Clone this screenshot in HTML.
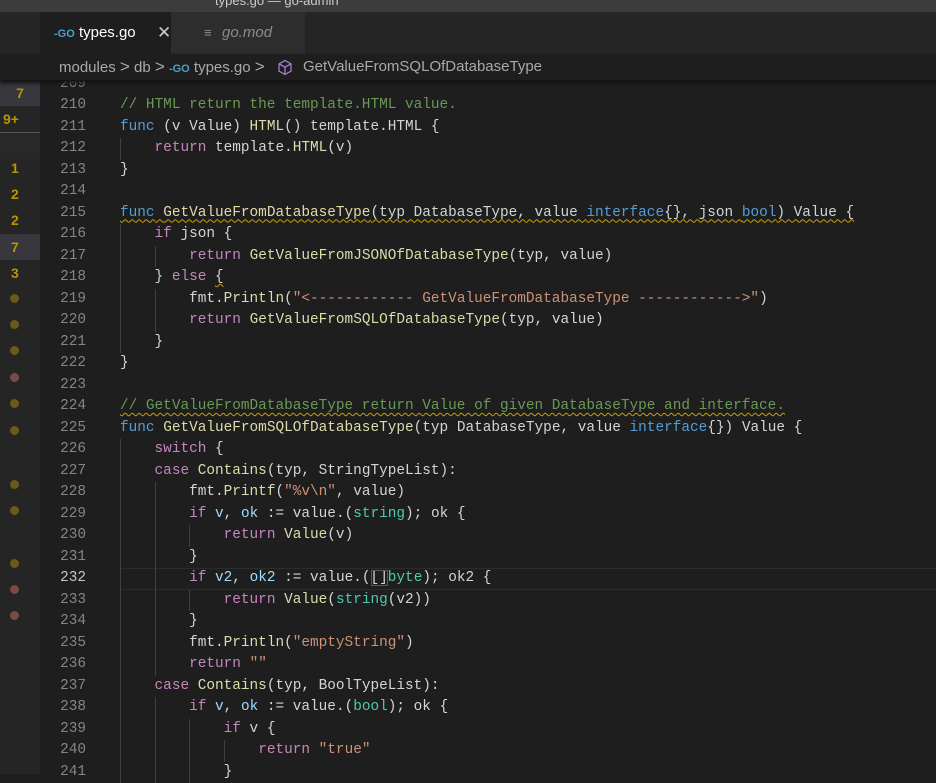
<!DOCTYPE html>
<html><head><meta charset="utf-8">
<style>
*{margin:0;padding:0;box-sizing:border-box}
body{width:936px;height:774px;overflow:hidden;background:#1e1e1e;position:relative;font-family:"Liberation Sans",sans-serif}
#title{position:absolute;left:0;top:0;width:936px;height:12px;background:#3c3c3c;overflow:hidden}
#title span{position:absolute;left:215px;top:-7px;font-size:13px;color:#ccc}
#tabs{position:absolute;left:0;top:12px;width:936px;height:42px;background:#252526}
.tab{position:absolute;top:0;height:42px;font-size:15px;line-height:42px}
#bc{position:absolute;left:0;top:54px;width:936px;height:26px;background:#1e1e1e;color:#a9a9a9;font-size:15px;line-height:26px;box-shadow:0 3px 4px #111;z-index:3}
#left{position:absolute;left:0;top:80px;width:40px;height:694px;background:#252526}
.b{position:absolute;left:0;width:40px;height:26px;text-align:center;color:#b89500;font-weight:bold;font-size:14px;line-height:26px}
.d{position:absolute;left:10px;width:9px;height:9px;border-radius:50%;background:#6b5a17}
.d.r{background:#7a4b45}
#code{position:absolute;left:40px;top:3px;width:896px;height:774px;font-family:"Liberation Mono",monospace;font-size:14.4px}
.l{position:absolute;left:0;width:896px;height:21.5px;line-height:21.5px;white-space:pre;color:#d4d4d4}
.n{position:absolute;left:0;width:46px;text-align:right;color:#858585}
.c{position:absolute;left:80px}
.g{display:inline-block;width:34.56px;height:21.5px;vertical-align:top;border-left:1px solid #404040}
.k{color:#c586c0}.f{color:#569cd6}.fn{color:#dcdcaa}.v{color:#9cdcfe}.t{color:#4ec9b0}.s{color:#ce9178}.cm{color:#6a9955}
.w{text-decoration:underline wavy #c9a000;text-decoration-thickness:1px;text-underline-offset:3px}
.go{color:#4aa3c9;font-weight:bold;font-size:11px}
</style></head><body>
<div id="title"><span>types.go — go-admin</span></div>
<div id="tabs">
 <div class="tab" style="left:40px;width:131px;background:#1e1e1e;color:#fff;padding-left:14px"><span class="go">-GO</span> types.go <span style="position:absolute;left:117px;color:#ccc;font-size:17px">✕</span></div>
 <div class="tab" style="left:171px;width:134px;background:#2d2d2d;color:#8b8b8b;font-style:italic"><span style="font-style:normal;font-size:13px;position:absolute;left:33px">≡</span><span style="position:absolute;left:51px">go.mod</span></div>
</div>
<div id="bc"><span style="position:absolute;left:59px">modules <span style="font-size:17px">&gt;</span> db <span style="font-size:17px">&gt;</span> <span class="go">-GO</span> types.go <span style="font-size:17px">&gt;</span></span>
<svg style="position:absolute;left:277px;top:5px" width="16" height="17" viewBox="0 0 16 17"><path d="M8 1.5 14 4.8v7.4L8 15.5 2 12.2V4.8z M2 4.8 8 8.2 14 4.8 M8 8.2v7.3" fill="none" stroke="#b180d7" stroke-width="1.2"/></svg>
<span style="position:absolute;left:303px">GetValueFromSQLOfDatabaseType</span></div>
<div id="left">
 <div class="b" style="top:0;background:#37373d">7</div>
 <div class="b" style="top:26px;text-align:left;padding-left:3px">9+</div>
 <div style="position:absolute;top:52px;left:0;width:40px;height:1px;background:#555"></div>
 <div style="position:absolute;top:53px;left:0;width:40px;height:26px;background:#282829"></div>
 <div class="b" style="top:75px;text-align:left;padding-left:11px">1</div>
 <div class="b" style="top:101px;text-align:left;padding-left:11px">2</div>
 <div class="b" style="top:127px;text-align:left;padding-left:11px">2</div>
 <div class="b" style="top:154px;background:#37373d;text-align:left;padding-left:11px">7</div>
 <div class="b" style="top:180px;text-align:left;padding-left:11px">3</div>
 <div class="d" style="top:214px"></div><div class="d" style="top:240px"></div><div class="d" style="top:266px"></div>
 <div class="d r" style="top:293px"></div><div class="d" style="top:319px"></div><div class="d" style="top:346px"></div>
 <div class="d" style="top:400px"></div><div class="d" style="top:426px"></div>
 <div class="d" style="top:479px"></div><div class="d r" style="top:505px"></div><div class="d r" style="top:531px"></div>
</div>
<div id="code">
<div class="l" style="top:70.5px"><span class="n">209</span></div>
<div class="l" style="top:92px"><span class="n">210</span><span class="c"><span class="cm">// HTML return the template.HTML value.</span></span></div>
<div class="l" style="top:113.5px"><span class="n">211</span><span class="c"><span class="f">func</span> (v Value) <span class="fn">HTML</span>() template.HTML {</span></div>
<div class="l" style="top:135px"><span class="n">212</span><span class="c"><span class="g"></span><span class="k">return</span> template.<span class="fn">HTML</span>(v)</span></div>
<div class="l" style="top:156.5px"><span class="n">213</span><span class="c">}</span></div>
<div class="l" style="top:178px"><span class="n">214</span></div>
<div class="l" style="top:199.5px"><span class="n">215</span><span class="c w"><span class="f">func</span> <span class="fn">GetValueFromDatabaseType</span>(typ DatabaseType, value <span class="f">interface</span>{}, json <span class="f">bool</span>) Value {</span></div>
<div class="l" style="top:221px"><span class="n">216</span><span class="c"><span class="g"></span><span class="k">if</span> json {</span></div>
<div class="l" style="top:242.5px"><span class="n">217</span><span class="c"><span class="g"></span><span class="g"></span><span class="k">return</span> <span class="fn">GetValueFromJSONOfDatabaseType</span>(typ, value)</span></div>
<div class="l" style="top:264px"><span class="n">218</span><span class="c"><span class="g"></span>} <span class="k">else</span> <span class="w">{</span></span></div>
<div class="l" style="top:285.5px"><span class="n">219</span><span class="c"><span class="g"></span><span class="g"></span>fmt.<span class="fn">Println</span>(<span class="s">"&lt;------------ GetValueFromDatabaseType ------------&gt;"</span>)</span></div>
<div class="l" style="top:307px"><span class="n">220</span><span class="c"><span class="g"></span><span class="g"></span><span class="k">return</span> <span class="fn">GetValueFromSQLOfDatabaseType</span>(typ, value)</span></div>
<div class="l" style="top:328.5px"><span class="n">221</span><span class="c"><span class="g"></span>}</span></div>
<div class="l" style="top:350px"><span class="n">222</span><span class="c">}</span></div>
<div class="l" style="top:371.5px"><span class="n">223</span></div>
<div class="l" style="top:393px"><span class="n">224</span><span class="c w"><span class="cm">// GetValueFromDatabaseType return Value of given DatabaseType and interface.</span></span></div>
<div class="l" style="top:414.5px"><span class="n">225</span><span class="c"><span class="f">func</span> <span class="fn">GetValueFromSQLOfDatabaseType</span>(typ DatabaseType, value <span class="f">interface</span>{}) Value {</span></div>
<div class="l" style="top:436px"><span class="n">226</span><span class="c"><span class="g"></span><span class="k">switch</span> {</span></div>
<div class="l" style="top:457.5px"><span class="n">227</span><span class="c"><span class="g"></span><span class="k">case</span> <span class="fn">Contains</span>(typ, StringTypeList):</span></div>
<div class="l" style="top:479px"><span class="n">228</span><span class="c"><span class="g"></span><span class="g"></span>fmt.<span class="fn">Printf</span>(<span class="s">"%v\n"</span>, value)</span></div>
<div class="l" style="top:500.5px"><span class="n">229</span><span class="c"><span class="g"></span><span class="g"></span><span class="k">if</span> <span class="v">v</span>, <span class="v">ok</span> := value.(<span class="t">string</span>); ok {</span></div>
<div class="l" style="top:522px"><span class="n">230</span><span class="c"><span class="g"></span><span class="g"></span><span class="g"></span><span class="k">return</span> <span class="fn">Value</span>(v)</span></div>
<div class="l" style="top:543.5px"><span class="n">231</span><span class="c"><span class="g"></span><span class="g"></span>}</span></div>
<div style="position:absolute;left:80px;top:565px;width:816px;height:21.5px;border-top:1px solid #2c2c2c;border-bottom:1px solid #2c2c2c"></div>
<div class="l" style="top:565px"><span class="n" style="color:#c6c6c6">232</span><span class="c"><span class="g"></span><span class="g"></span><span class="k">if</span> <span class="v">v2</span>, <span class="v">ok2</span> := value.(<span style="outline:1px solid #5a5a5a;outline-offset:-1px">[]</span><span class="t">byte</span>); ok2 {</span></div>
<div class="l" style="top:586.5px"><span class="n">233</span><span class="c"><span class="g"></span><span class="g"></span><span class="g"></span><span class="k">return</span> <span class="fn">Value</span>(<span class="t">string</span>(v2))</span></div>
<div class="l" style="top:608px"><span class="n">234</span><span class="c"><span class="g"></span><span class="g"></span>}</span></div>
<div class="l" style="top:629.5px"><span class="n">235</span><span class="c"><span class="g"></span><span class="g"></span>fmt.<span class="fn">Println</span>(<span class="s">"emptyString"</span>)</span></div>
<div class="l" style="top:651px"><span class="n">236</span><span class="c"><span class="g"></span><span class="g"></span><span class="k">return</span> <span class="s">""</span></span></div>
<div class="l" style="top:672.5px"><span class="n">237</span><span class="c"><span class="g"></span><span class="k">case</span> <span class="fn">Contains</span>(typ, BoolTypeList):</span></div>
<div class="l" style="top:694px"><span class="n">238</span><span class="c"><span class="g"></span><span class="g"></span><span class="k">if</span> <span class="v">v</span>, <span class="v">ok</span> := value.(<span class="t">bool</span>); ok {</span></div>
<div class="l" style="top:715.5px"><span class="n">239</span><span class="c"><span class="g"></span><span class="g"></span><span class="g"></span><span class="k">if</span> v {</span></div>
<div class="l" style="top:737px"><span class="n">240</span><span class="c"><span class="g"></span><span class="g"></span><span class="g"></span><span class="g"></span><span class="k">return</span> <span class="s">"true"</span></span></div>
<div class="l" style="top:758.5px"><span class="n">241</span><span class="c"><span class="g"></span><span class="g"></span><span class="g"></span>}</span></div>
</div>
</body></html>
